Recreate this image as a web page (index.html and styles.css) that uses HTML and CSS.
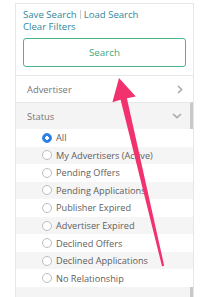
FILE: index.html
```html
<!DOCTYPE html>
<html>
<head>
<meta charset="utf-8">
<link rel="stylesheet" href="styles.css">
</head>
<body>
<div class="panel">
  <div class="tools">
    <div class="links"><span class="link">Save Search</span><span class="sep"></span><span class="link">Load Search</span></div>
    <div class="links"><span class="link">Clear Filters</span></div>
    <div class="search-btn">Search</div>
  </div>
  <div class="section">
    <span>Advertiser</span>
    <svg class="chev" width="6" height="9" viewBox="0 0 6 9"><path d="M1 1 L4.6 4.5 L1 8" fill="none" stroke="#aaa" stroke-width="1.6"/></svg>
  </div>
  <div class="section open">
    <span>Status</span>
    <svg class="chev-down" width="10" height="6" viewBox="0 0 10 6"><path d="M1 1 L5 4.6 L9 1" fill="none" stroke="#aaa" stroke-width="1.6"/></svg>
  </div>
  <div class="options">
    <div class="opt"><span class="radio checked"></span><span>All</span></div>
    <div class="opt"><span class="radio"></span><span>My Advertisers (Active)</span></div>
    <div class="opt"><span class="radio"></span><span>Pending Offers</span></div>
    <div class="opt"><span class="radio"></span><span>Pending Applications</span></div>
    <div class="opt"><span class="radio"></span><span>Publisher Expired</span></div>
    <div class="opt"><span class="radio"></span><span>Advertiser Expired</span></div>
    <div class="opt"><span class="radio"></span><span>Declined Offers</span></div>
    <div class="opt"><span class="radio"></span><span>Declined Applications</span></div>
    <div class="opt"><span class="radio"></span><span>No Relationship</span></div>
  </div>
  <div class="footer"></div>
</div>
<svg class="arrow" width="200" height="297" viewBox="0 0 200 297">
  <polygon points="119,78 135.8,96.5 126.9,98.2 164.2,265.8 162,266.3 120.6,99.7 112.4,102.2" fill="#f2316f"/>
</svg>
</body>
</html>
```
FILE: styles.css
```css
html, body {
  margin: 0;
  padding: 0;
  background: #fff;
}
body {
  width: 200px;
  height: 297px;
  overflow: hidden;
  position: relative;
  font-family: "Open Sans", "DejaVu Sans", sans-serif;
}
.panel {
  margin: 3px 0 0 15px;
  width: 177px;
  border: 1px solid #e6e6e6;
  border-bottom: none;
}
.tools {
  padding: 4px 7px 8px 7px;
}
.links {
  display: flex;
  align-items: center;
  height: 12px;
  font-size: 9.6px;
  color: #318a9c;
  white-space: nowrap;
}
.sep {
  display: inline-block;
  width: 1px;
  height: 9px;
  background: #ccc;
  margin: 0 3px 0 3px;
}
.search-btn {
  margin-top: 6px;
  height: 27px;
  border: 1.5px solid #4db58a;
  border-radius: 3px;
  display: flex;
  align-items: center;
  justify-content: center;
  font-size: 9.8px;
  color: #3fa87c;
}
.section {
  border-top: 1px solid #e6e6e6;
  height: 26px;
  display: flex;
  align-items: center;
  justify-content: space-between;
  padding: 0 10px 0 11px;
  font-size: 9.4px;
  color: #777;
}
.section.open {
  background: #f4f4f4;
  border-right: 3px solid #c9c9c9;
  padding-right: 8px;
}
.options {
  display: flex;
  flex-direction: column;
}
.opt {
  height: 17.55px;
  display: flex;
  align-items: center;
  padding-left: 26px;
  font-size: 9.2px;
  color: #5e5e5e;
  white-space: nowrap;
}
.opt:nth-child(even) {
  background: #f5f5f5;
}
.radio {
  width: 8px;
  height: 8px;
  border: 1px solid #bdbdbd;
  border-radius: 50%;
  background: #fff;
  margin-right: 4px;
  flex: none;
  box-sizing: content-box;
}
.radio.checked {
  border-color: #2f7fe8;
  background: radial-gradient(circle, #fff 0 1.7px, #2f7fe8 2.1px);
}
.footer {
  height: 12px;
  background: #f4f4f4;
  border-right: 3px solid #c9c9c9;
}
.arrow {
  position: absolute;
  left: 0;
  top: 0;
}
```
